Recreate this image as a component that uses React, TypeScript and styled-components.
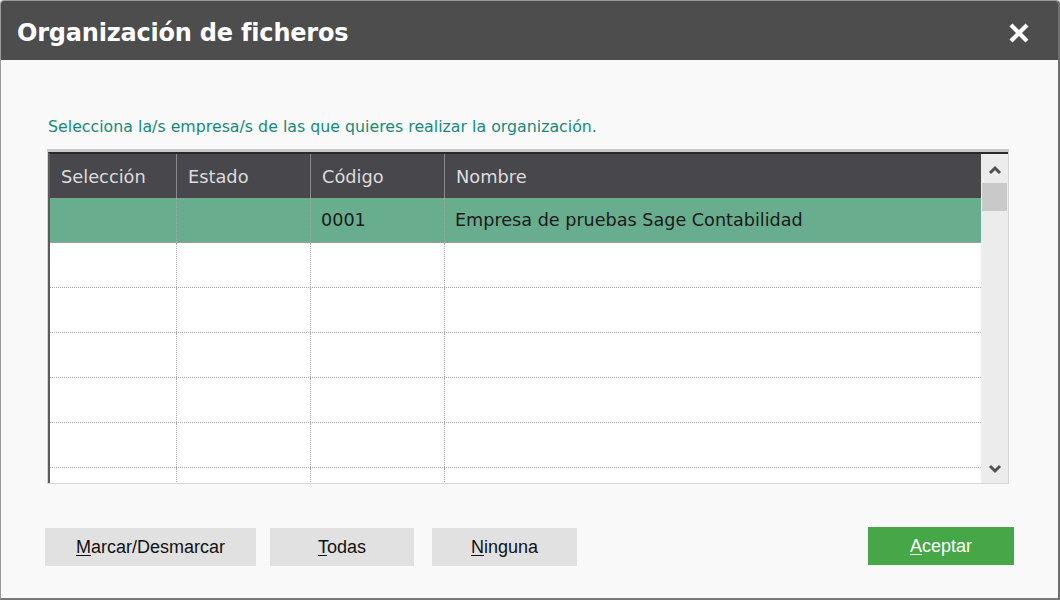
import React from "react";
import styled, { createGlobalStyle } from "styled-components";

const Global = createGlobalStyle`
  html, body { margin: 0; padding: 0; background: #f9f9f9; }
  * { box-sizing: border-box; }
`;

const Window = styled.div`
  width: 1060px;
  height: 600px;
  background: #f9f9f9;
  border: 1px solid #9a9a9a;
  border-right: 2px solid #6f6f6f;
  border-bottom: 2px solid #7a7a7a;
  border-top-left-radius: 4px;
  border-top-right-radius: 4px;
  overflow: hidden;
  display: flex;
  flex-direction: column;
`;

const TitleBar = styled.div`
  height: 59px;
  background: #4d4d4d;
  display: flex;
  align-items: center;
  justify-content: space-between;
  padding: 4px 28px 0 16px;
  flex-shrink: 0;
`;

const Title = styled.h1`
  margin: 0;
  font-family: "DejaVu Sans", Verdana, sans-serif;
  font-weight: bold;
  font-size: 24px;
  letter-spacing: -0.2px;
  color: #ffffff;
`;

const CloseIcon = styled.svg`
  display: block;
`;

const Body = styled.div`
  flex: 1;
  padding: 57px 52px 0 46px;
  display: flex;
  flex-direction: column;
`;

const Hint = styled.div`
  font-family: "DejaVu Sans", Tahoma, sans-serif;
  font-size: 15.8px;
  color: #168a7a;
  letter-spacing: 0;
  padding-left: 1px;
  height: 32px;
`;

const GridFrame = styled.div`
  width: 962px;
  height: 335px;
  border: 1px solid #d6d6d6;
  border-top: 3px solid #c9c9c9;
  background: #ffffff;
  display: flex;
`;

const GridInner = styled.div`
  flex: 1;
  border-left: 2px solid #5b5b5b;
  border-top: 2px solid #2a2a2a;
  display: flex;
  flex-direction: column;
  overflow: hidden;
`;

const Row = styled.div<{ $head?: boolean; $sel?: boolean }>`
  display: grid;
  grid-template-columns: 126px 134px 134px 1fr;
  height: ${(p) => (p.$head ? "44px" : "45px")};
  flex-shrink: 0;
  background: ${(p) => (p.$head ? "#48484c" : p.$sel ? "#68ad8e" : "#ffffff")};
  border-bottom: ${(p) => (p.$head ? "none" : "1px dotted #a8a8a8")};
`;

const Cell = styled.div<{ $head?: boolean }>`
  font-family: "DejaVu Sans", Tahoma, sans-serif;
  font-size: ${(p) => (p.$head ? "17.8px" : "17.6px")};
  color: ${(p) => (p.$head ? "#dcdcdc" : "#1a1a1a")};
  padding-left: ${(p) => (p.$head ? "11px" : "10px")};
  display: flex;
  align-items: center;
  border-left: ${(p) => (p.$head ? "1px solid #8a8a8a" : "1px dotted #a8a8a8")};
  &:first-child { border-left: none; }
  white-space: nowrap;
`;

const ScrollBar = styled.div`
  width: 27px;
  background: #ececec;
  display: flex;
  flex-direction: column;
  align-items: center;
  padding-top: 8px;
  border-top: 2px solid #2a2a2a;
`;

const Thumb = styled.div`
  width: 25px;
  height: 28px;
  background: #c9c9c9;
  margin-top: 5px;
`;

const Spacer = styled.div`
  flex: 1;
`;

const ArrowBox = styled.div<{ $bottom?: boolean }>`
  height: 16px;
  display: flex;
  align-items: center;
  justify-content: center;
  margin-bottom: ${(p) => (p.$bottom ? "6px" : "0")};
`;

const Footer = styled.div`
  display: flex;
  align-items: center;
  margin-top: 44px;
  margin-left: -2px;
  margin-right: -8px;
`;

const Btn = styled.button<{ $w: number; $gap: number; $primary?: boolean }>`
  width: ${(p) => p.$w}px;
  height: 38px;
  border: none;
  background: ${(p) => (p.$primary ? "#46a746" : "#e1e1e1")};
  color: ${(p) => (p.$primary ? "#ffffff" : "#111111")};
  font-family: "Liberation Sans", Arial, sans-serif;
  font-size: 18px;
  letter-spacing: 0;
  padding: 0;
  margin-right: ${(p) => p.$gap}px;
  position: relative;
  top: ${(p) => (p.$primary ? "-1px" : 0)};
  cursor: default;
  u { text-underline-offset: 2px; }
`;

const rows = [
  { sel: true, code: "0001", name: "Empresa de pruebas Sage Contabilidad" },
  { sel: false, code: "", name: "" },
  { sel: false, code: "", name: "" },
  { sel: false, code: "", name: "" },
  { sel: false, code: "", name: "" },
  { sel: false, code: "", name: "" },
  { sel: false, code: "", name: "" },
];

const Chevron = ({ up }: { up?: boolean }) => (
  <svg width="14" height="10" viewBox="0 0 14 10">
    <path
      d={up ? "M2 8 L7 3 L12 8" : "M2 2 L7 7 L12 2"}
      fill="none"
      stroke="#505050"
      strokeWidth="3"
    />
  </svg>
);

export default function App() {
  return (
    <>
      <Global />
      <Window>
        <TitleBar>
          <Title>Organización de ficheros</Title>
          <CloseIcon width="22" height="20" viewBox="0 0 22 20">
            <path d="M3 2 L19 18 M19 2 L3 18" stroke="#ffffff" strokeWidth="4.2" strokeLinecap="butt" />
          </CloseIcon>
        </TitleBar>
        <Body>
          <Hint>Selecciona la/s empresa/s de las que quieres realizar la organización.</Hint>
          <GridFrame>
            <GridInner>
              <Row $head>
                <Cell $head>Selección</Cell>
                <Cell $head>Estado</Cell>
                <Cell $head>Código</Cell>
                <Cell $head>Nombre</Cell>
              </Row>
              {rows.map((r, i) => (
                <Row key={i} $sel={r.sel}>
                  <Cell></Cell>
                  <Cell></Cell>
                  <Cell>{r.code}</Cell>
                  <Cell>{r.name}</Cell>
                </Row>
              ))}
            </GridInner>
            <ScrollBar>
              <ArrowBox>
                <Chevron up />
              </ArrowBox>
              <Thumb />
              <Spacer />
              <ArrowBox $bottom>
                <Chevron />
              </ArrowBox>
            </ScrollBar>
          </GridFrame>
          <Footer>
            <Btn $w={211} $gap={14}>
              <u>M</u>arcar/Desmarcar
            </Btn>
            <Btn $w={144} $gap={18}>
              <u>T</u>odas
            </Btn>
            <Btn $w={145} $gap={0}>
              <u>N</u>inguna
            </Btn>
            <Spacer />
            <Btn $w={146} $gap={0} $primary>
              <u>A</u>ceptar
            </Btn>
          </Footer>
        </Body>
      </Window>
    </>
  );
}
